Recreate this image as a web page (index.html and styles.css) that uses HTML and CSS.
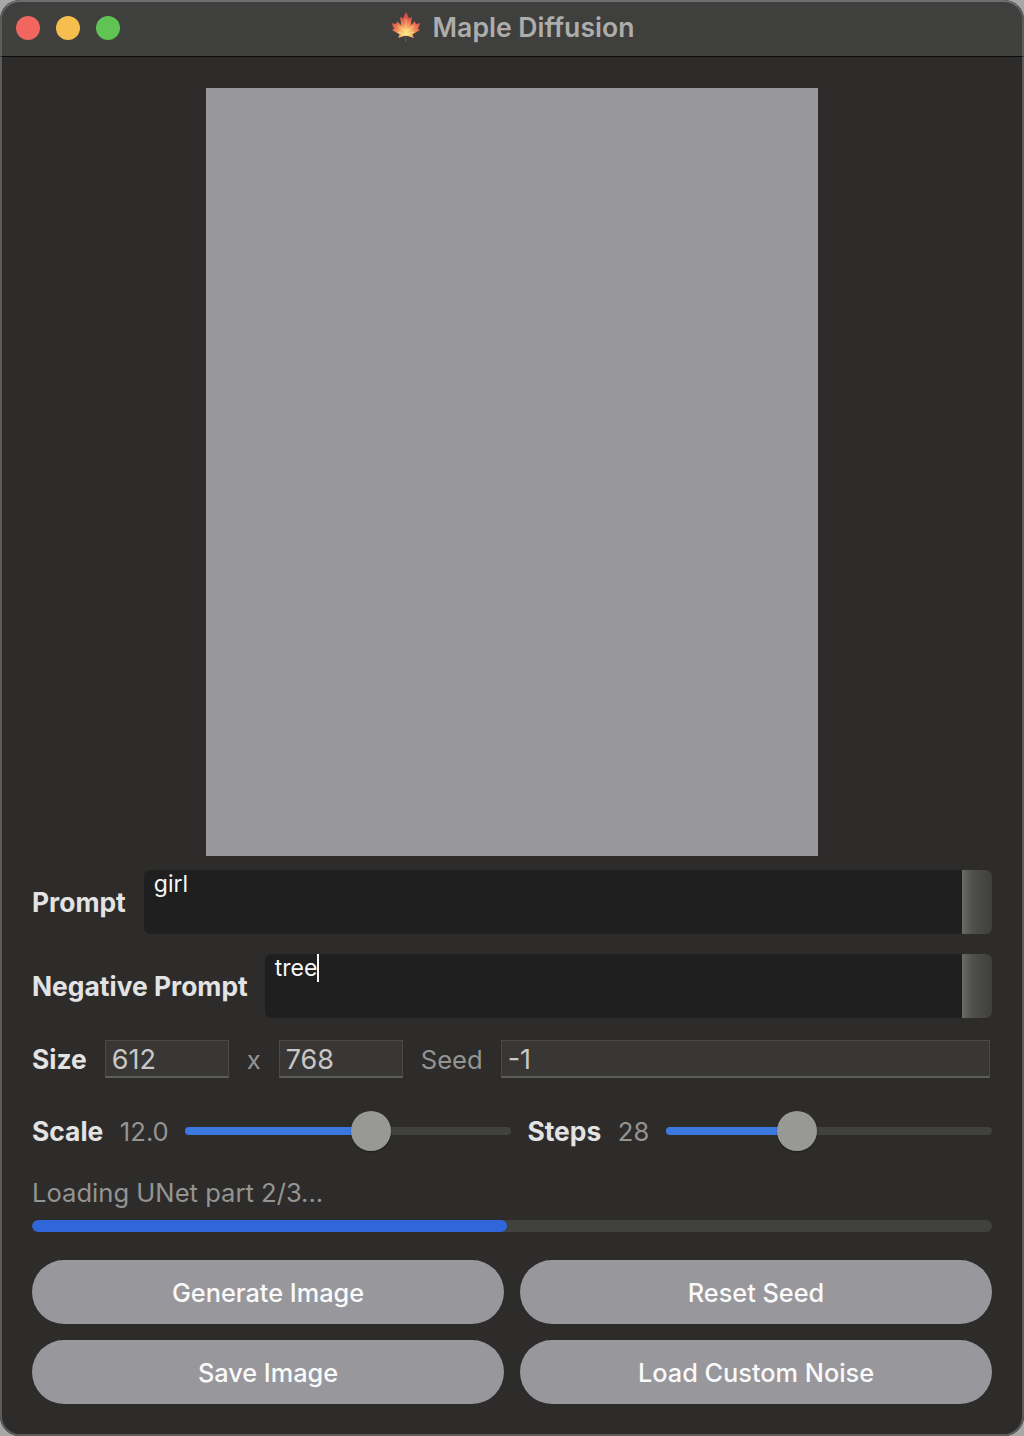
FILE: index.html
```html
<!DOCTYPE html>
<html lang="en">
<head>
<meta charset="utf-8">
<title>Maple Diffusion</title>
<link rel="stylesheet" href="styles.css">
</head>
<body>
<div class="window">
  <header class="titlebar">
    <div class="lights">
      <span class="light red"></span>
      <span class="light yellow"></span>
      <span class="light green"></span>
    </div>
    <div class="title">
      <svg class="leaf" width="32" height="32" viewBox="0 0 32 32" aria-hidden="true">
        <defs>
          <radialGradient id="leafFill" gradientUnits="userSpaceOnUse" cx="16" cy="23" r="20">
            <stop offset="0" stop-color="#fde98a"/>
            <stop offset="0.25" stop-color="#f9c56a"/>
            <stop offset="0.5" stop-color="#ee8a58"/>
            <stop offset="0.85" stop-color="#d9504a"/>
          </radialGradient>
        </defs>
        <path d="M16 1 L19.2 7.4 L22 5.8 L20.8 14.2 L24.8 10.2 L26 13 L30.5 12 L28 17.8 L30 19 L22.4 23.4 L24 27 L17 24.8 L15 24.8 L8 27 L9.6 23.4 L2 19 L4 17.8 L1.5 12 L6 13 L7.2 10.2 L11.2 14.2 L10 5.8 L12.8 7.4 Z" fill="url(#leafFill)"/>
        <path d="M16 8 V25 M16 20 L8 15 M16 20 L24 15 M16 24 L8 21 M16 24 L24 21" stroke="#fff3b0" stroke-opacity="0.6" stroke-width="0.7" fill="none"/>
        <path d="M16 25 L15.6 31" stroke="#7a5a42" stroke-width="1" fill="none"/>
      </svg>
      <span>Maple Diffusion</span>
    </div>
  </header>
  <main class="content">
    <div class="preview"></div>
    <div class="prompt-row first">
      <label class="strong">Prompt</label>
      <div class="prompt-box">
        <div class="prompt-text">girl</div>
        <div class="scroller"></div>
      </div>
    </div>
    <div class="prompt-row">
      <label class="strong">Negative Prompt</label>
      <div class="prompt-box">
        <div class="prompt-text">tree<span class="caret"></span></div>
        <div class="scroller"></div>
      </div>
    </div>
    <div class="size-row">
      <span class="strong">Size</span>
      <div class="field small">612</div>
      <span class="muted times">x</span>
      <div class="field small">768</div>
      <span class="muted seed">Seed</span>
      <div class="field wide">-1</div>
    </div>
    <div class="slider-row">
      <div class="slider-group">
        <span class="strong">Scale</span>
        <span class="muted">12.0</span>
        <div class="slider">
          <div class="slider-fill scale-fill"></div>
          <div class="thumb scale-thumb"></div>
        </div>
      </div>
      <div class="slider-group">
        <span class="strong">Steps</span>
        <span class="muted">28</span>
        <div class="slider">
          <div class="slider-fill steps-fill"></div>
          <div class="thumb steps-thumb"></div>
        </div>
      </div>
    </div>
    <div class="status muted">Loading UNet part 2/3...</div>
    <div class="progress"><div class="progress-fill"></div></div>
    <div class="buttons">
      <button class="btn">Generate Image</button>
      <button class="btn">Reset Seed</button>
      <button class="btn">Save Image</button>
      <button class="btn">Load Custom Noise</button>
    </div>
  </main>
</div>
</body>
</html>
```

FILE: styles.css
```css
* { box-sizing: border-box; }
html, body { margin: 0; padding: 0; }
body {
  width: 1024px;
  height: 1436px;
  background: #a8a8a8;
  font-family: Inter, "Liberation Sans", sans-serif;
  overflow: hidden;
}
.window {
  width: 1024px;
  height: 1436px;
  border-radius: 20px;
  background: #2d2c2b;
  box-shadow: inset 0 0 0 2px #5c5c5c;
  overflow: hidden;
  position: relative;
}
.titlebar {
  height: 57px;
  background: #3f3f3e;
  border-top: 2px solid #6e6e6e;
  border-left: 2px solid #5c5c5c;
  border-right: 2px solid #5c5c5c;
  border-bottom: 1px solid #0c0c0c;
  border-top-left-radius: 20px;
  border-top-right-radius: 20px;
  display: flex;
  align-items: center;
  justify-content: center;
  position: relative;
}
.lights {
  position: absolute;
  left: 14px;
  top: 14px;
  display: flex;
  gap: 16px;
}
.light { width: 24px; height: 24px; border-radius: 50%; }
.red { background: #f1675f; }
.yellow { background: #f6bd4f; }
.green { background: #5fc454; }
.title {
  display: flex;
  align-items: center;
  gap: 11px;
  font-size: 26.6px;
  font-weight: 600;
  color: #adadac;
  margin-top: -5px;
}
.leaf { display: block; flex: none; }
.content {
  padding: 31px 32px 0;
  display: flex;
  flex-direction: column;
}
.preview {
  width: 612px;
  height: 768px;
  background: #98979c;
  align-self: center;
  flex: none;
}
.strong { font-size: 26.4px; font-weight: 700; color: #e3e3e3; white-space: nowrap; }
.muted { font-size: 25.6px; font-weight: 400; color: #949493; white-space: nowrap; }
.prompt-row {
  display: flex;
  align-items: center;
  gap: 17px;
  height: 64px;
  margin-top: 20px;
}
.prompt-row.first { margin-top: 14px; gap: 18px; }
.prompt-box {
  flex: 1;
  height: 64px;
  background: #1f1f1f;
  border-radius: 6px;
  display: flex;
  overflow: hidden;
}
.prompt-text {
  flex: 1;
  padding: 0 10px;
  font-size: 23px;
  line-height: 28px;
  color: #f8f8f8;
}
.caret {
  display: inline-block;
  width: 2px;
  height: 28px;
  background: #f8f8f8;
  vertical-align: top;
}
.scroller {
  width: 30px;
  flex: none;
  background: linear-gradient(90deg, #6a6a69 0, #4f4f4e 10px, #403f3e 100%);
}
.size-row {
  display: flex;
  align-items: center;
  height: 38px;
  margin-top: 22px;
  padding-right: 2px;
}
.field {
  height: 38px;
  background: #383736;
  border: 1px solid #4a4a49;
  border-bottom: 2px solid #5d5d5c;
  padding: 0 6px;
  font-size: 27px;
  line-height: 37px;
  color: #c8c8c7;
  font-weight: 400;
}
.field.small { width: 124px; flex: none; }
.field.wide { flex: 1; }
.size-row .strong { margin-right: 18px; }
.times { width: 50px; text-align: center; }
.seed { margin-left: 18px; margin-right: 18px; }
.slider-row {
  display: flex;
  align-items: center;
  gap: 16px;
  height: 40px;
  margin-top: 33px;
}
.slider-group {
  flex: 1 1 auto;
  display: flex;
  align-items: center;
  gap: 16.6px;
}
.slider {
  flex: 1;
  height: 8px;
  background: #414140;
  border-radius: 4px;
  position: relative;
}
.slider-fill {
  height: 8px;
  background: #3a7ae0;
  border-radius: 4px;
}
.scale-fill { width: 56%; }
.steps-fill { width: 40%; }
.thumb {
  position: absolute;
  top: -16px;
  width: 40px;
  height: 40px;
  border-radius: 50%;
  background: #989897;
  box-shadow: 0 1px 2px rgba(0, 0, 0, 0.35);
}
.scale-thumb { left: 166px; }
.steps-thumb { left: 111px; }
.status { margin-top: 27px; line-height: 30px; }
.progress {
  height: 12px;
  background: #414140;
  border-radius: 6px;
  margin-top: 12px;
  overflow: hidden;
}
.progress-fill {
  width: 475px;
  height: 12px;
  background: #3166db;
  border-radius: 6px;
}
.buttons {
  display: grid;
  grid-template-columns: 1fr 1fr;
  gap: 16px;
  margin-top: 28px;
}
.btn {
  height: 64px;
  border: 0;
  border-radius: 32px;
  background: #98979c;
  color: #fafafa;
  font-family: inherit;
  font-size: 25.3px;
  font-weight: 500;
  padding: 0;
}
```
